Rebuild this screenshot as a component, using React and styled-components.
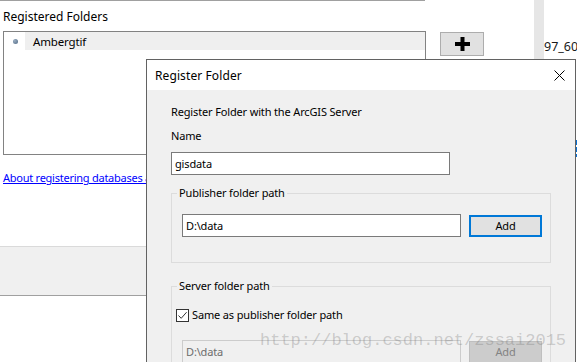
import styled, { createGlobalStyle } from "styled-components";

const GlobalStyle = createGlobalStyle`
  html, body {
    margin: 0;
    padding: 0;
    background: #fff;
  }
  body {
    font-family: "Segoe UI", "Noto Sans", sans-serif;
    font-size: 11px;
    letter-spacing: -0.15px;
    color: #000;
  }
`;

const Page = styled.div`
  position: relative;
  width: 577px;
  height: 362px;
  overflow: hidden;
  display: flex;
  background: #fff;
`;

const LeftPane = styled.div`
  width: 534px;
  display: flex;
  flex-direction: column;
`;

const TopRule = styled.div`
  width: 425px;
  height: 1px;
  background: #a0a0a0;
`;

const SectionTitle = styled.div`
  margin: 8px 0 0 3px;
  font-size: 12px;
  letter-spacing: 0;
  line-height: 16px;
`;

const FolderRow = styled.div`
  display: flex;
  align-items: flex-start;
  margin-top: 6px;
`;

const ListBox = styled.div`
  margin-left: 3px;
  width: 423px;
  height: 124px;
  box-sizing: border-box;
  border: 1px solid #828282;
`;

const ListItem = styled.div`
  display: flex;
  align-items: center;
  height: 18px;
`;

const Bullet = styled.span`
  width: 5px;
  height: 5px;
  margin: 0 7px 0 9px;
  border-radius: 50%;
  background: radial-gradient(circle at 35% 35%, #9aadc1, #4f6984);
`;

const ItemLabel = styled.span`
  flex: 1;
  align-self: stretch;
  display: flex;
  align-items: center;
  padding-left: 8px;
  font-size: 11.5px;
  background: ${(p) => (p.$selected ? "#efefef" : "transparent")};
`;

const PlusButton = styled.button`
  margin: 1px 0 0 14px;
  width: 44px;
  height: 24px;
  padding: 0;
  box-sizing: border-box;
  display: flex;
  align-items: center;
  justify-content: center;
  background: #e1e1e1;
  border: 1px solid #adadad;
`;

const HelpLink = styled.a`
  margin: 15px 0 0 3px;
  line-height: 16px;
  letter-spacing: -0.25px;
  color: #0000ff;
  text-decoration: underline;
  white-space: nowrap;
`;

const GrayBand = styled.div`
  margin-top: 60px;
  height: 50px;
  box-sizing: border-box;
  background: #f0f0f0;
  border-top: 1px solid #dadada;
  border-bottom: 1px solid #a0a0a0;
`;

const ScrollStrip = styled.div`
  width: 10px;
  background: #e6e6e6;
`;

const RightCol = styled.div`
  flex: 1;
  overflow: hidden;
  white-space: nowrap;
  padding-top: 39px;
  font-size: 12.5px;
  letter-spacing: 0;
  line-height: 16px;
  color: #1a1a1a;
`;

const BlueMark = styled.div`
  margin: 85px 0 0 32px;
  width: 4px;
  height: 17px;
  background: repeating-linear-gradient(
    to bottom,
    #0a6fd0 0 5px,
    transparent 5px 7px
  );
`;

const Dialog = styled.div`
  position: absolute;
  left: 146px;
  top: 59px;
  width: 430px;
  height: 320px;
  box-sizing: border-box;
  border: 1px solid #626262;
  background: #f0f0f0;
`;

const TitleBar = styled.div`
  height: 30px;
  display: flex;
  align-items: center;
  justify-content: space-between;
  padding: 0 10px 0 8px;
  background: #fff;
`;

const Title = styled.span`
  font-size: 12px;
  letter-spacing: 0.1px;
`;

const DialogBody = styled.div`
  padding: 14px 24px 0 24px;
`;

const Line = styled.div`
  line-height: 16px;
  margin-top: ${(p) => p.$gap || 0}px;
`;

const TextBox = styled.input`
  display: block;
  box-sizing: border-box;
  width: 279px;
  height: 23px;
  margin: ${(p) => (p.$top ? "8px 0 0" : "0")};
  padding: 0 3px;
  font: inherit;
  letter-spacing: inherit;
  color: ${(p) => (p.disabled ? "#6d6d6d" : "#000")};
  background: ${(p) => (p.disabled ? "#f0f0f0" : "#fff")};
  border: 1px solid ${(p) => (p.disabled ? "#cccccc" : "#7a7a7a")};
  outline: none;
`;

const Group = styled.fieldset`
  margin: ${(p) => p.$gap}px 0 0 0;
  width: 380px;
  box-sizing: border-box;
  border: 1px solid #dcdcdc;
  padding: 0 4px 25px;
  min-width: 0;

  legend {
    padding: 0 2px;
    margin-left: 1px;
    line-height: 14px;
  }
`;

const PathRow = styled.div`
  display: flex;
  align-items: center;
  gap: 8px;
  margin: ${(p) => p.$gap}px 0 0 6px;
`;

const AddButton = styled.button`
  width: 73px;
  height: 22px;
  padding: 0;
  box-sizing: border-box;
  font: inherit;
  letter-spacing: inherit;
  color: ${(p) => (p.disabled ? "#838383" : "#000")};
  background: ${(p) => (p.disabled ? "#cccccc" : "#e1e1e1")};
  border: ${(p) => (p.$focused ? "2px solid #0078d7" : "1px solid #bfbfbf")};
`;

const CheckRow = styled.label`
  display: flex;
  align-items: center;
  gap: 3px;
  margin-top: 14px;
  line-height: 16px;
`;

const Watermark = styled.div`
  position: absolute;
  left: 260px;
  top: 331px;
  font-family: "Liberation Mono", monospace;
  font-size: 17px;
  letter-spacing: 0;
  line-height: 20px;
  color: rgba(110, 110, 110, 0.3);
  pointer-events: none;
  white-space: nowrap;
`;

function PlusIcon() {
  return (
    <svg width="15" height="14" viewBox="0 0 15 14">
      <rect x="5.5" y="0" width="4" height="14" fill="#000" />
      <rect x="0" y="5" width="15" height="4" fill="#000" />
    </svg>
  );
}

function CloseIcon() {
  return (
    <svg width="11" height="11" viewBox="0 0 11 11">
      <path d="M0.5 0.5 L10.5 10.5 M10.5 0.5 L0.5 10.5" stroke="#000" strokeWidth="1" />
    </svg>
  );
}

function CheckBox() {
  return (
    <svg width="13" height="13" viewBox="0 0 13 13">
      <rect x="0.5" y="0.5" width="12" height="12" fill="#fff" stroke="#333" />
      <path d="M2.5 6.5 L5.2 9.3 L10.6 3.2" fill="none" stroke="#333" strokeWidth="1" />
    </svg>
  );
}

export default function App() {
  return (
    <>
      <GlobalStyle />
      <Page>
        <LeftPane>
          <TopRule />
          <SectionTitle>Registered Folders</SectionTitle>
          <FolderRow>
            <ListBox>
              <ListItem>
                <Bullet />
                <ItemLabel $selected>Ambergtif</ItemLabel>
              </ListItem>
            </ListBox>
            <PlusButton>
              <PlusIcon />
            </PlusButton>
          </FolderRow>
          <HelpLink href="#">About registering databases and folders</HelpLink>
          <GrayBand />
        </LeftPane>
        <ScrollStrip />
        <RightCol>
          97_604
          <BlueMark />
        </RightCol>

        <Dialog>
          <TitleBar>
            <Title>Register Folder</Title>
            <CloseIcon />
          </TitleBar>
          <DialogBody>
            <Line>Register Folder with the ArcGIS Server</Line>
            <Line $gap={8}>Name</Line>
            <TextBox $top readOnly value="gisdata" />

            <Group $gap={11}>
              <legend>Publisher folder path</legend>
              <PathRow $gap={14}>
                <TextBox readOnly value="D:\data" />
                <AddButton $focused>Add</AddButton>
              </PathRow>
            </Group>

            <Group $gap={16}>
              <legend>Server folder path</legend>
              <CheckRow>
                <CheckBox />
                Same as publisher folder path
              </CheckRow>
              <PathRow $gap={17}>
                <TextBox disabled value="D:\data" readOnly />
                <AddButton disabled>Add</AddButton>
              </PathRow>
            </Group>
          </DialogBody>
        </Dialog>

        <Watermark>http://blog.csdn.net/zssai2015</Watermark>
      </Page>
    </>
  );
}
